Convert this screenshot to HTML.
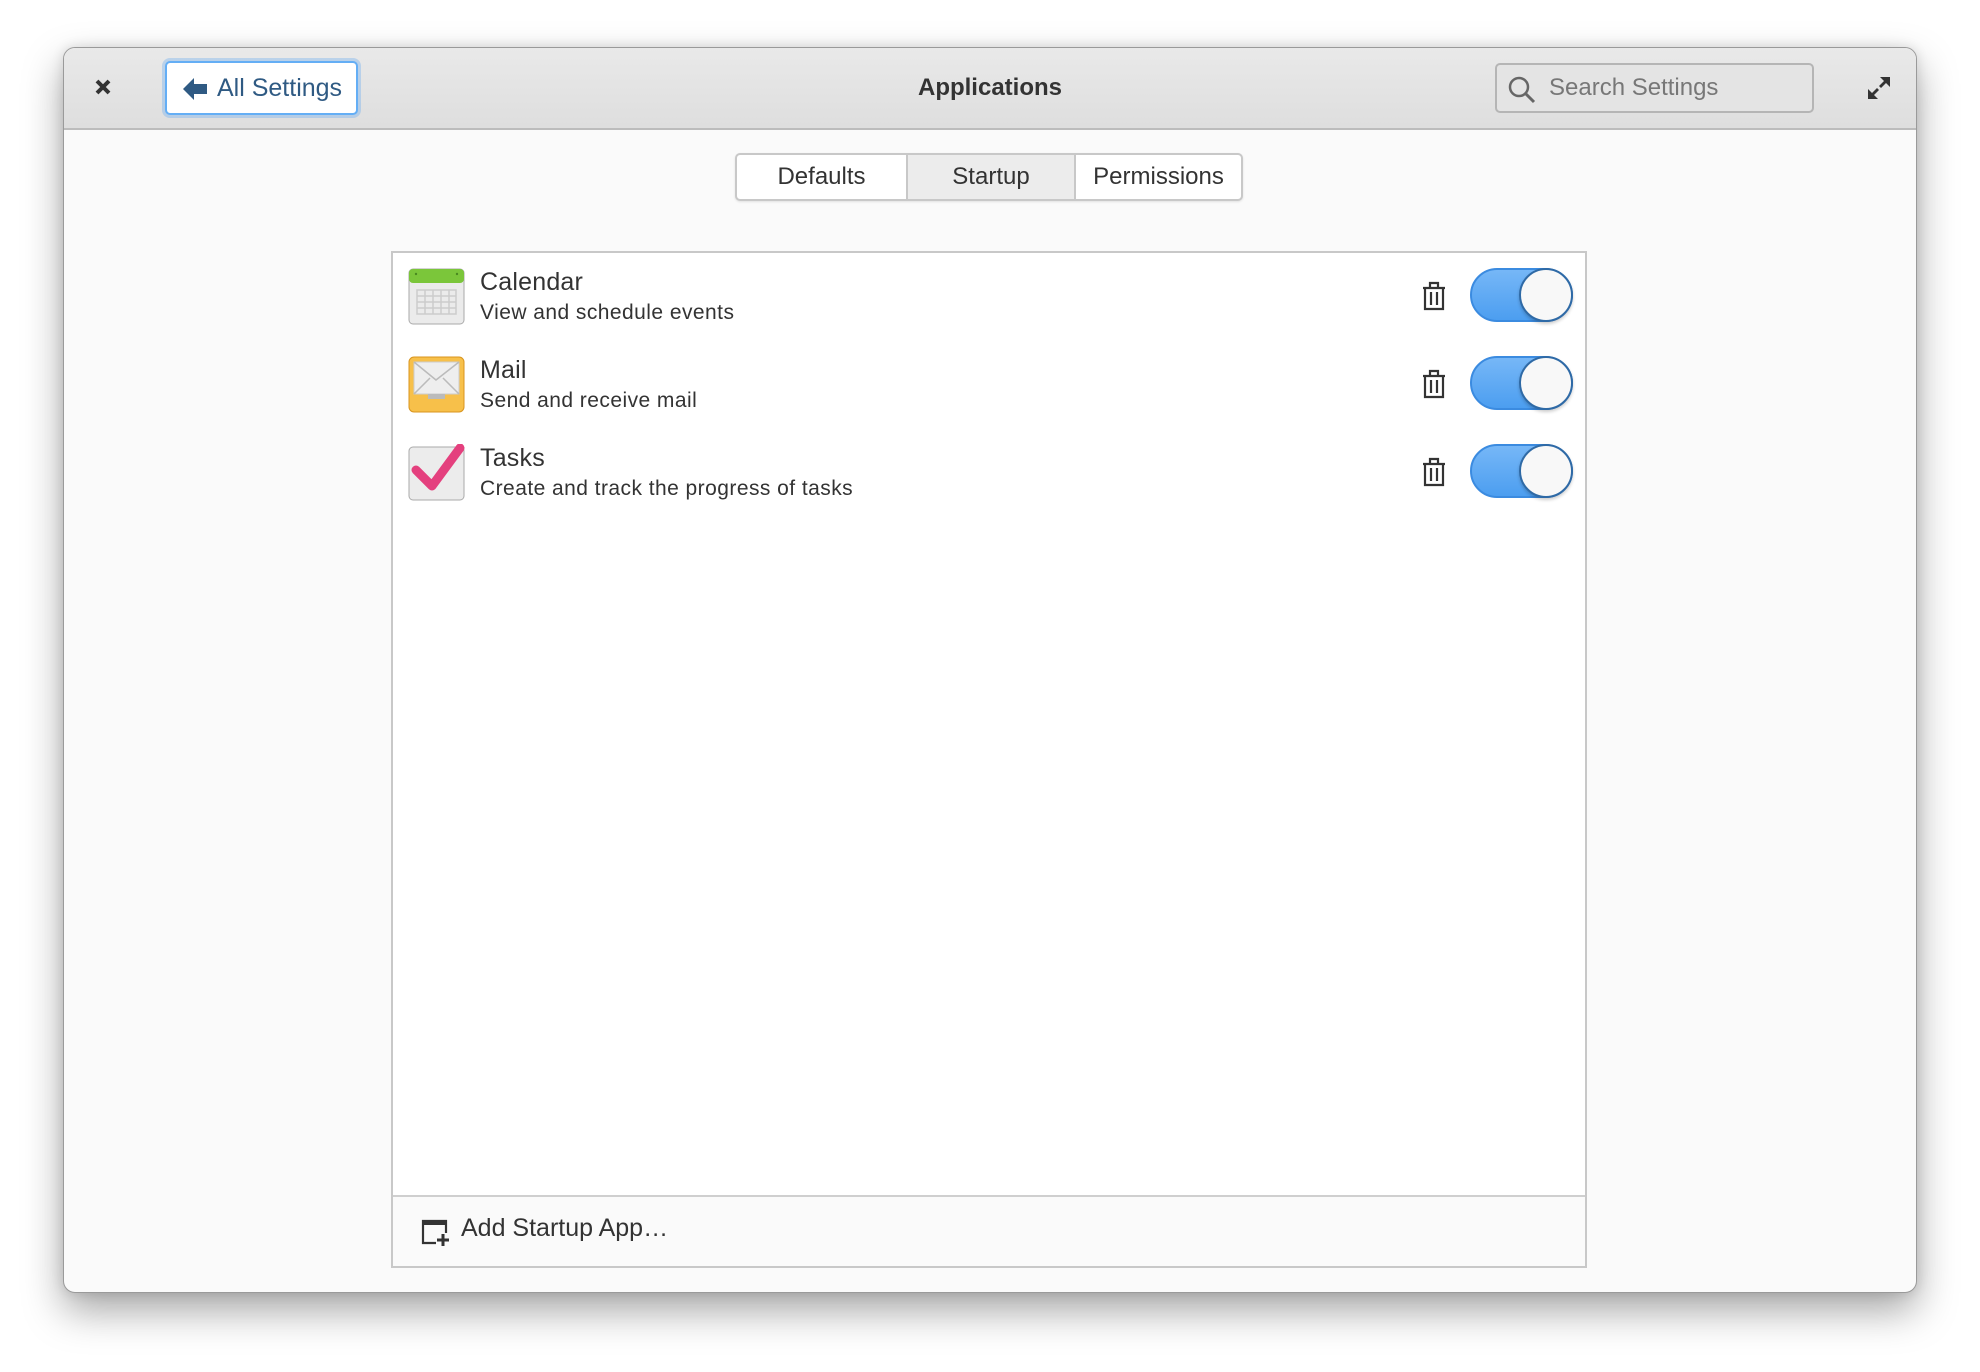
<!DOCTYPE html>
<html><head><meta charset="utf-8"><style>
*{box-sizing:border-box;margin:0;padding:0}
body{width:1980px;height:1372px;background:#fff;font-family:"Liberation Sans",sans-serif;position:relative;overflow:hidden;color:#333}
.win{position:absolute;left:63px;top:47px;width:1854px;height:1246px;background:#fafafa;border:1px solid #9a9a9a;border-radius:12px;box-shadow:0 18px 40px rgba(0,0,0,.35),0 0 12px rgba(0,0,0,.12);overflow:hidden}
.hdr{position:absolute;left:0;top:0;right:0;height:82px;background:linear-gradient(#e9e9e9,#dedede);border-bottom:2px solid #bcbcbc}
.abs{position:absolute}
.btn{left:101px;top:13px;width:193px;height:54px;background:#fff;border:2px solid #64aef5;border-radius:5px;box-shadow:0 0 0 3px rgba(100,170,240,.35);color:#2f5a83;font-size:25px;line-height:50px;padding-left:50px}
.title{left:0;right:0;top:26px;text-align:center;font-weight:bold;font-size:24px;color:#333}
.search{left:1431px;top:15px;width:319px;height:50px;border:2px solid #b5b5b5;border-radius:5px;background:#e4e4e4;color:#777;font-size:24px;line-height:46px;padding-left:52px}
.tabs{left:671px;top:105px;width:508px;height:48px;border:2px solid #c8c8c8;border-radius:5px;background:#fff;display:flex;box-shadow:0 1px 2px rgba(0,0,0,.1);overflow:hidden}
.tabs div{text-align:center;font-size:24px;line-height:44px;color:#333}
.tabs .sel{background:#ececec;border-left:2px solid #c8c8c8;border-right:2px solid #c8c8c8}
.list{left:327px;top:203px;width:1196px;height:1017px;border:2px solid #c8c8c8;background:#fff}
.foot{position:absolute;left:0;right:0;bottom:0;height:71px;border-top:2px solid #cfcfcf;background:#fafafa}
.row{position:absolute;left:0;right:0;height:88px}
.nm{position:absolute;left:87px;top:15px;font-size:25px;color:#333;letter-spacing:.2px}
.ds{position:absolute;left:87px;top:48px;font-size:21px;color:#333;letter-spacing:.45px}
.sw{position:absolute;left:1077px;top:15px;width:103px;height:54px;border-radius:27px;background:linear-gradient(#76b7f7,#4c9ef0);border:2px solid #3b8be0}
.sw::after{content:"";position:absolute;right:-2px;top:-2px;width:54px;height:54px;border-radius:50%;background:#f8f8f8;border:2px solid #2f6aa6;box-sizing:border-box;box-shadow:0 2px 3px rgba(0,0,0,.2)}
.tr{position:absolute;left:1028px;top:28px}
</style></head><body>
<div class="win">
 <div class="hdr">
  <svg class="abs" style="left:30px;top:30px" width="18" height="18" viewBox="0 0 18 18"><path d="M3 3L15 15M15 3L3 15" stroke="#333" stroke-width="4"/></svg>
  <div class="abs btn"><svg class="abs" style="left:16px;top:15px" width="24" height="22" viewBox="0 0 24 22"><path d="M0 11L11 0V6H24V16H11V22Z" fill="#2f5a83"/></svg>All Settings</div>
  <div class="abs title">Applications</div>
  <div class="abs search"><svg class="abs" style="left:10px;top:10px" width="30" height="30" viewBox="0 0 30 30"><circle cx="12" cy="12" r="9" fill="none" stroke="#666" stroke-width="2.5"/><path d="M18.5 18.5L27 27" stroke="#666" stroke-width="3"/></svg>Search Settings</div>
  <svg class="abs" style="left:1802px;top:27px" width="26" height="26" viewBox="0 0 26 26"><path d="M14 2H24V12L20 8L15 13L13 11L18 6Z M12 24H2V14L6 18L11 13L13 15L8 20Z" fill="#333"/></svg>
 </div>
 <div class="abs tabs"><div style="width:169px">Defaults</div><div class="sel" style="width:170px">Startup</div><div style="flex:1">Permissions</div></div>
 <div class="abs list">
  <div class="row" style="top:0">
   <svg class="abs" style="left:15px;top:15px" width="57" height="58" viewBox="0 0 57 58"><rect x="1" y="1" width="55" height="55" rx="4" fill="#ebebeb" stroke="#aaa"/><rect x="1" y="1" width="55" height="14" rx="4" fill="#7bc63a"/><circle cx="8" cy="6" r="1.2" fill="#4a8a20"/><circle cx="49" cy="6" r="1.2" fill="#4a8a20"/><g fill="none" stroke="#ccc" stroke-width="1.5"><rect x="9" y="22" width="39" height="24"/><path d="M17 22V46M25 22V46M33 22V46M41 22V46M9 28H48M9 34H48M9 40H48"/></g></svg>
   <div class="nm">Calendar</div><div class="ds">View and schedule events</div>
   <svg class="tr" width="26" height="30" viewBox="0 0 26 30"><g fill="none" stroke="#333" stroke-width="2.2"><path d="M2 7H24M9 7V2H17V7M4 7V28H22V7M10 11V24M16 11V24"/></g></svg>
   <div class="sw"></div>
  </div>
  <div class="row" style="top:88px">
   <svg class="abs" style="left:15px;top:15px" width="57" height="58" viewBox="0 0 57 58"><rect x="1" y="1" width="55" height="55" rx="5" fill="#f7c04a" stroke="#d9951f"/><rect x="6" y="6" width="45" height="32" fill="#eee" stroke="#ccc"/><path d="M6 6L28 24L51 6M6 38L22 22M51 38L35 22" stroke="#bbb" fill="none" stroke-width="1.5"/><rect x="20" y="38" width="17" height="5" fill="#bbb"/></svg>
   <div class="nm">Mail</div><div class="ds">Send and receive mail</div>
   <svg class="tr" width="26" height="30" viewBox="0 0 26 30"><g fill="none" stroke="#333" stroke-width="2.2"><path d="M2 7H24M9 7V2H17V7M4 7V28H22V7M10 11V24M16 11V24"/></g></svg>
   <div class="sw"></div>
  </div>
  <div class="row" style="top:176px">
   <svg class="abs" style="left:15px;top:15px" width="57" height="58" viewBox="0 0 57 58"><rect x="1" y="3" width="55" height="53" rx="4" fill="#ececec" stroke="#aaa"/><path d="M8 26L24 42L52 4" stroke="#e4407e" stroke-width="9" fill="none" stroke-linecap="round" stroke-linejoin="round"/></svg>
   <div class="nm">Tasks</div><div class="ds">Create and track the progress of tasks</div>
   <svg class="tr" width="26" height="30" viewBox="0 0 26 30"><g fill="none" stroke="#333" stroke-width="2.2"><path d="M2 7H24M9 7V2H17V7M4 7V28H22V7M10 11V24M16 11V24"/></g></svg>
   <div class="sw"></div>
  </div>
  <div class="foot">
   <svg class="abs" style="left:28px;top:22px" width="28" height="28" viewBox="0 0 28 28"><path d="M15 24H2V2H25V14" fill="none" stroke="#333" stroke-width="2.2"/><rect x="2" y="2" width="23" height="4" fill="#333"/><path d="M22 15V27M16 21H28" stroke="#333" stroke-width="3"/></svg>
   <div class="abs" style="left:68px;top:17px;font-size:25px;color:#333">Add Startup App…</div>
  </div>
 </div>
</div>
</body></html>
